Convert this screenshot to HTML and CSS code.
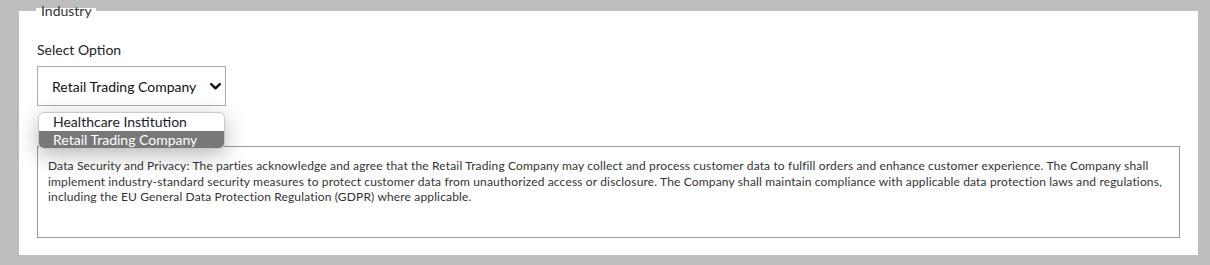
FILE: index.html
```html
<!DOCTYPE html>
<html>
<head>
<meta charset="utf-8">
<link rel="stylesheet" href="styles.css">
</head>
<body>
<div class="panel">
  <div class="legend">Industry</div>
  <div class="field">
    <label class="label">Select Option</label>
    <div class="select-wrap">
      <div class="select">
        <span class="select-text">Retail Trading Company</span>
        <svg class="chevron" width="11" height="7" viewBox="0 0 11 7"><path d="M1.2 1.2 L5.5 5.4 L9.8 1.2" fill="none" stroke="#111" stroke-width="2.4" stroke-linecap="round" stroke-linejoin="round"/></svg>
      </div>
      <div class="dropdown">
        <div class="opt">Healthcare Institution</div>
        <div class="opt sel">Retail Trading Company</div>
      </div>
    </div>
    <div class="textarea">Data Security and Privacy: The parties acknowledge and agree that the Retail Trading Company may collect and process customer data to fulfill orders and enhance customer experience. The Company shall implement industry-standard security measures to protect customer data from unauthorized access or disclosure. The Company shall maintain compliance with applicable data protection laws and regulations, including the EU General Data Protection Regulation (GDPR) where applicable.</div>
  </div>
</div>
</body>
</html>
```

FILE: styles.css
```css
html, body {
  margin: 0;
  padding: 0;
}
body {
  background: #bdbdbd;
  width: 1210px;
  height: 265px;
  overflow: hidden;
  padding-top: 11px;
  box-sizing: border-box;
  font-family: "Lato", "Liberation Sans", sans-serif;
  color: #222;
}
.panel {
  display: flow-root;
  margin-left: 19px;
  width: 1179px;
  height: 244px;
  background: #fff;
  box-sizing: border-box;
}
.legend {
  width: fit-content;
  margin-top: -3px;
  margin-left: 17px;
  padding: 0 4px 0 5px;
  background: #fff;
  font-size: 14px;
  line-height: 6px;
  height: 12px;
  color: #333;
}
.field {
  padding: 21px 0 0 18px;
  display: flex;
  flex-direction: column;
}
.label {
  font-size: 14px;
  line-height: 18px;
  color: #222;
  height: 18px;
}
.select-wrap {
  position: relative;
  margin-top: 7px;
  width: 189px;
}
.select {
  height: 40px;
  box-sizing: border-box;
  border: 1px solid #aaa;
  display: flex;
  align-items: center;
  padding: 0 0 0 14px;
  font-size: 14px;
  color: #111;
}
.select-text {
  flex: 1;
}
.chevron {
  margin-right: 4px;
  margin-top: 1px;
}
.dropdown {
  position: absolute;
  left: 1px;
  top: 46px;
  width: 187px;
  box-sizing: border-box;
  border: 1px solid #c9c9c9;
  border-radius: 6px;
  background: #fff;
  overflow: hidden;
  box-shadow: 0 6px 22px rgba(0, 0, 0, 0.28);
  z-index: 2;
}
.opt {
  height: 17.5px;
  line-height: 17px;
  padding-left: 14px;
  font-size: 14px;
  color: #1a1a2a;
}
.opt.sel {
  background: #787878;
  color: #fff;
}
.textarea {
  margin-top: 40px;
  width: 1143px;
  height: 92px;
  box-sizing: border-box;
  border: 1px solid #9a9a9a;
  padding: 11px 10px 0 10px;
  font-size: 12px;
  letter-spacing: 0.15px;
  line-height: 15.6px;
  color: #333;
}
```
